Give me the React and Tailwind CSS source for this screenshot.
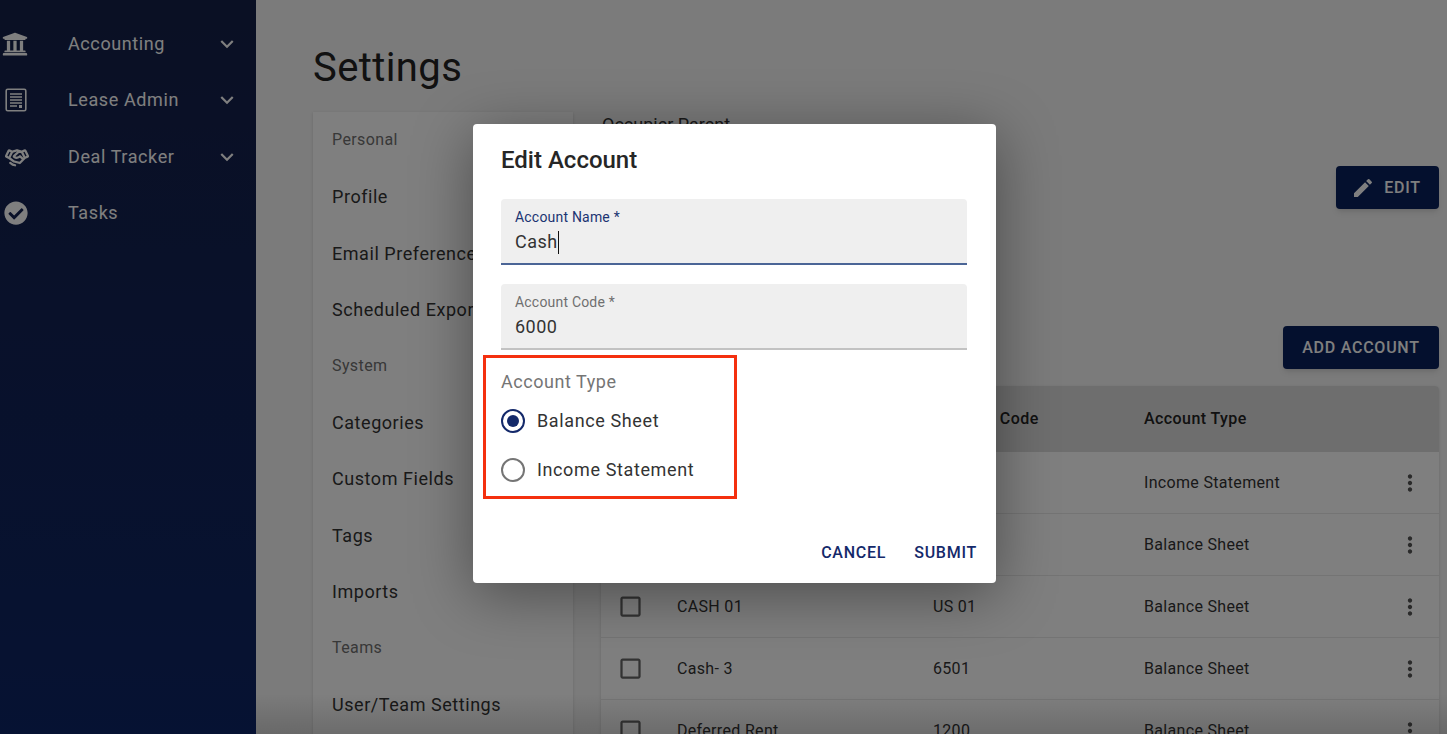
import { FaUniversity, FaCheckCircle } from 'react-icons/fa';
import { PiHandshakeBold } from 'react-icons/pi';
import { MdEdit, MdExpandMore, MdMoreVert, MdCheckBoxOutlineBlank } from 'react-icons/md';

const navItems = [
  { label: 'Accounting', arrow: true, icon: <FaUniversity className="w-[26px] h-[26px] ml-[2px]" /> },
  { label: 'Lease Admin', arrow: true, icon: <LeaseIcon /> },
  { label: 'Deal Tracker', arrow: true, icon: <PiHandshakeBold className="w-[24px] h-[24px] ml-[5px]" /> },
  { label: 'Tasks', arrow: false, icon: <FaCheckCircle className="w-[24px] h-[24px] ml-[4px]" /> },
];

const settingsItems = [
  { label: 'Personal', head: true },
  { label: 'Profile' },
  { label: 'Email Preferences' },
  { label: 'Scheduled Exports' },
  { label: 'System', head: true },
  { label: 'Categories' },
  { label: 'Custom Fields' },
  { label: 'Tags' },
  { label: 'Imports' },
  { label: 'Teams', head: true },
  { label: 'User/Team Settings' },
];

const rows = [
  { name: '', code: '', type: 'Income Statement' },
  { name: '', code: '', type: 'Balance Sheet' },
  { name: 'CASH 01', code: 'US 01', type: 'Balance Sheet' },
  { name: 'Cash- 3', code: '6501', type: 'Balance Sheet' },
  { name: 'Deferred Rent', code: '1200', type: 'Balance Sheet' },
];

function LeaseIcon() {
  return (
    <svg viewBox="0 0 22 24" className="w-[22px] h-[24px] ml-[5px]" fill="none" stroke="currentColor">
      <rect x="1.2" y="1.2" width="19.6" height="21.6" rx="1.5" strokeWidth="1.6" />
      <path d="M5 6h12M5 9h12M5 12h12M5 15h12M5 18h7" strokeWidth="1.6" />
      <rect x="14" y="17" width="3" height="3" fill="currentColor" stroke="none" />
    </svg>
  );
}

function Sidebar() {
  return (
    <aside className="w-[256px] shrink-0 h-full bg-linear-to-b from-[#152048] to-[#0d2566] text-white pt-[15.5px]">
      {navItems.map(item => (
        <div key={item.label} className="h-[56.5px] flex items-center">
          <div className="w-[68px] shrink-0 flex items-center">{item.icon}</div>
          <span className="text-[18px] tracking-[0.6px] flex-1 -mt-[1px]">{item.label}</span>
          {item.arrow && <MdExpandMore className="w-[26px] h-[26px] mr-[16px]" />}
        </div>
      ))}
    </aside>
  );
}

function SettingsNav() {
  return (
    <div className="w-[260px] shrink-0 bg-white shadow-[0_1px_3px_rgba(0,0,0,0.15)]">
      {settingsItems.map(item => (
        <div
          key={item.label}
          className={`h-[56.45px] flex items-center pl-[19px] whitespace-nowrap ${item.head ? 'text-[16px] tracking-[0.4px] text-[#707070]' : 'text-[18px] tracking-[0.55px] text-[#333]'}`}
        >
          {item.label}
        </div>
      ))}
    </div>
  );
}

function AccountsTable() {
  return (
    <div className="rounded-[4px] bg-white shadow-[0_1px_3px_rgba(0,0,0,0.15)] text-[#333] text-[16px] tracking-[0.32px]">
      <div className="h-[66px] bg-[#dddddd] rounded-t-[4px] flex items-center font-medium tracking-[0.42px] text-[#222]">
        <div className="w-[332px]" />
        <div className="w-[211px]">Account Code</div>
        <div>Account Type</div>
      </div>
      {rows.map((row, i) => (
        <div key={i} className="h-[62px] flex items-center border-b border-[#e9e9e9]">
          <div className="w-[76px] pl-[16px] shrink-0">
            <MdCheckBoxOutlineBlank className="w-[27px] h-[27px] text-[#666]" />
          </div>
          <div className="w-[256px] shrink-0">{row.name}</div>
          <div className="w-[211px] shrink-0">{row.code}</div>
          <div className="flex-1">{row.type}</div>
          <MdMoreVert className="w-[26px] h-[26px] mr-[16px] text-[#555]" />
        </div>
      ))}
    </div>
  );
}

function Field({ label, value, focused }) {
  return (
    <div className={`h-[66px] rounded-t-[4px] bg-[#efefef] pl-[14px] pr-[15px] pt-[10px] border-b-2 ${focused ? 'border-[#4b6596]' : 'border-[#c2c2c2]'}`}>
      <div className={`text-[14px] tracking-[0.2px] leading-[16px] ${focused ? 'text-[#1b3472]' : 'text-[#6f6f6f]'}`}>{label}</div>
      <div className="text-[18px] tracking-[0.5px] leading-[26px] mt-[4px] text-[#333] flex items-center">
        {value}
        {focused && <span className="w-px h-[23px] bg-[#111]" />}
      </div>
    </div>
  );
}

function Radio({ label, checked }) {
  return (
    <div className="h-[49px] flex items-center gap-[12px]">
      <span className={`w-[24px] h-[24px] rounded-full border-2 flex items-center justify-center ${checked ? 'border-[#14296a]' : 'border-[#757575]'}`}>
        {checked && <span className="w-[12px] h-[12px] rounded-full bg-[#14296a]" />}
      </span>
      <span className="text-[18px] tracking-[0.62px] text-[#333]">{label}</span>
    </div>
  );
}

function EditDialog() {
  return (
    <div className="relative w-[523px] h-[459px] bg-white rounded-[4px] shadow-[0_11px_60px_rgba(0,0,0,0.4)] pl-[28px] pr-[29px] pt-[20px]">
      <h2 className="text-[24px] leading-[32px] font-medium text-[#262626]">Edit Account</h2>
      <div className="mt-[23px] flex flex-col gap-[19px]">
        <Field label="Account Name *" value="Cash" focused />
        <Field label="Account Code *" value="6000" />
      </div>
      <div className="mt-[20px] text-[18px] tracking-[0.55px] leading-[24px] text-[#757575]">Account Type</div>
      <div className="mt-[2px]">
        <Radio label="Balance Sheet" checked />
        <Radio label="Income Statement" />
      </div>
      <div className="absolute right-[19px] bottom-[18px] flex gap-[28px] text-[16px] font-medium tracking-[0.75px] text-[#14296a]">
        <span>CANCEL</span>
        <span>SUBMIT</span>
      </div>
      <div className="absolute left-[10px] top-[231px] w-[254px] h-[144px] border-[3px] border-[#f4300f]" />
    </div>
  );
}

export default function App() {
  return (
    <div className="relative h-screen overflow-hidden flex bg-[#f6f6f6] font-['Roboto',sans-serif]">
      <Sidebar />
      <main className="flex-1 pl-[57px] pr-[8px] min-w-0">
        <h1 className="h-[112px] pt-[24px] flex items-center text-[40px] tracking-[0.4px] text-[#222]">Settings</h1>
        <div className="flex gap-[28px]">
          <SettingsNav />
          <div className="flex-1 min-w-0">
            <div className="text-[18px] leading-[24px] pt-[1px] pl-[1px] text-[#333]">Occupier Parent</div>
            <div className="flex justify-end mt-[29px]">
              <button className="h-[43px] w-[103px] rounded-[4px] bg-[#08205c] text-white text-[16px] font-medium tracking-[0.75px] flex items-center justify-center gap-[9px] pr-[3px] shadow-md">
                <MdEdit className="w-[24px] h-[24px]" /> EDIT
              </button>
            </div>
            <div className="flex justify-end mt-[117px]">
              <button className="h-[43px] w-[156px] rounded-[4px] bg-[#08205c] text-white text-[16px] font-medium tracking-[0.75px] shadow-md">
                ADD ACCOUNT
              </button>
            </div>
            <div className="mt-[17px]">
              <AccountsTable />
            </div>
          </div>
        </div>
      </main>
      <div className="absolute inset-0 bg-black/50 pl-[473px] pt-[124px]">
        <EditDialog />
      </div>
      <div className="absolute left-[256px] right-0 bottom-0 h-[40px] bg-linear-to-b from-transparent to-black/15" />
    </div>
  );
}
